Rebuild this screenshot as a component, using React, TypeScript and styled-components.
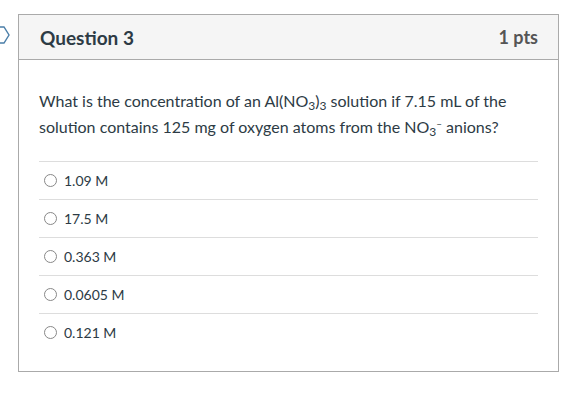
import React from 'react';
import styled, { createGlobalStyle } from 'styled-components';

const GlobalStyle = createGlobalStyle`
  body {
    margin: 0;
    background: #ffffff;
    font-family: Lato, "Open Sans", "Liberation Sans", sans-serif;
    color: #2d3b45;
  }
`;

const answers = ['1.09 M', '17.5 M', '0.363 M', '0.0605 M', '0.121 M'];

const App: React.FC = () => {
  return (
    <>
      <GlobalStyle />
      <Page>
        <FlagIcon viewBox="0 0 12 20" aria-hidden="true">
          <path d="M-6 2 H4 L9 10 L4 18 H-6" fill="none" stroke="#4a7ea8" strokeWidth="1.4" />
        </FlagIcon>
        <Card>
          <Header>
            <Title>Question 3</Title>
            <Points>1 pts</Points>
          </Header>
          <Body>
            <QuestionText>
              What is the concentration of an Al(NO<sub>3</sub>)<sub>3</sub> solution if 7.15 mL of the
              solution contains 125 mg of oxygen atoms from the NO<sub>3</sub>
              <sup>–</sup> anions?
            </QuestionText>
            <AnswerList>
              {answers.map((a) => (
                <Answer key={a}>
                  <Radio type="radio" name="q3" />
                  <AnswerLabel>{a}</AnswerLabel>
                </Answer>
              ))}
            </AnswerList>
          </Body>
        </Card>
      </Page>
    </>
  );
};

export default App;

const Page = styled.div`
  position: relative;
  padding: 14px 0 0 18px;
`;

const FlagIcon = styled.svg`
  position: absolute;
  left: 0;
  top: 25px;
  width: 12px;
  height: 20px;
`;

const Card = styled.div`
  width: 541px;
  height: 358px;
  box-sizing: border-box;
  border: 1px solid #aaaaaa;
`;

const Header = styled.div`
  height: 45px;
  box-sizing: border-box;
  padding: 0 20px 0 21px;
  background: #f5f5f5;
  border-bottom: 1px solid #aaaaaa;
  display: flex;
  align-items: center;
  justify-content: space-between;
`;

const Title = styled.h2`
  margin: 0;
  font-size: 19px;
  font-weight: 700;
  color: #2d3b45;
`;

const Points = styled.div`
  font-size: 18px;
  font-weight: 700;
  color: #555555;
`;

const Body = styled.div`
  padding: 28px 20px 0 20px;
`;

const QuestionText = styled.div`
  font-size: 16px;
  line-height: 26px;
  color: #2d3b45;
  padding-bottom: 21px;
  padding-right: 20px;

  sub {
    font-size: 12px;
    vertical-align: -3px;
    line-height: 0;
  }
  sup {
    font-size: 10px;
    vertical-align: 6px;
    line-height: 0;
  }
`;

const AnswerList = styled.div`
  display: flex;
  flex-direction: column;
`;

const Answer = styled.label`
  display: flex;
  align-items: center;
  height: 38px;
  box-sizing: border-box;
  border-top: 1px solid #dddddd;
  padding-left: 5px;
`;

const Radio = styled.input`
  appearance: none;
  width: 13px;
  height: 13px;
  margin: 0 7px 0 0;
  border: 1px solid #888888;
  border-radius: 50%;
  background: #ffffff;
`;

const AnswerLabel = styled.span`
  font-size: 14px;
  color: #2d3b45;
`;
